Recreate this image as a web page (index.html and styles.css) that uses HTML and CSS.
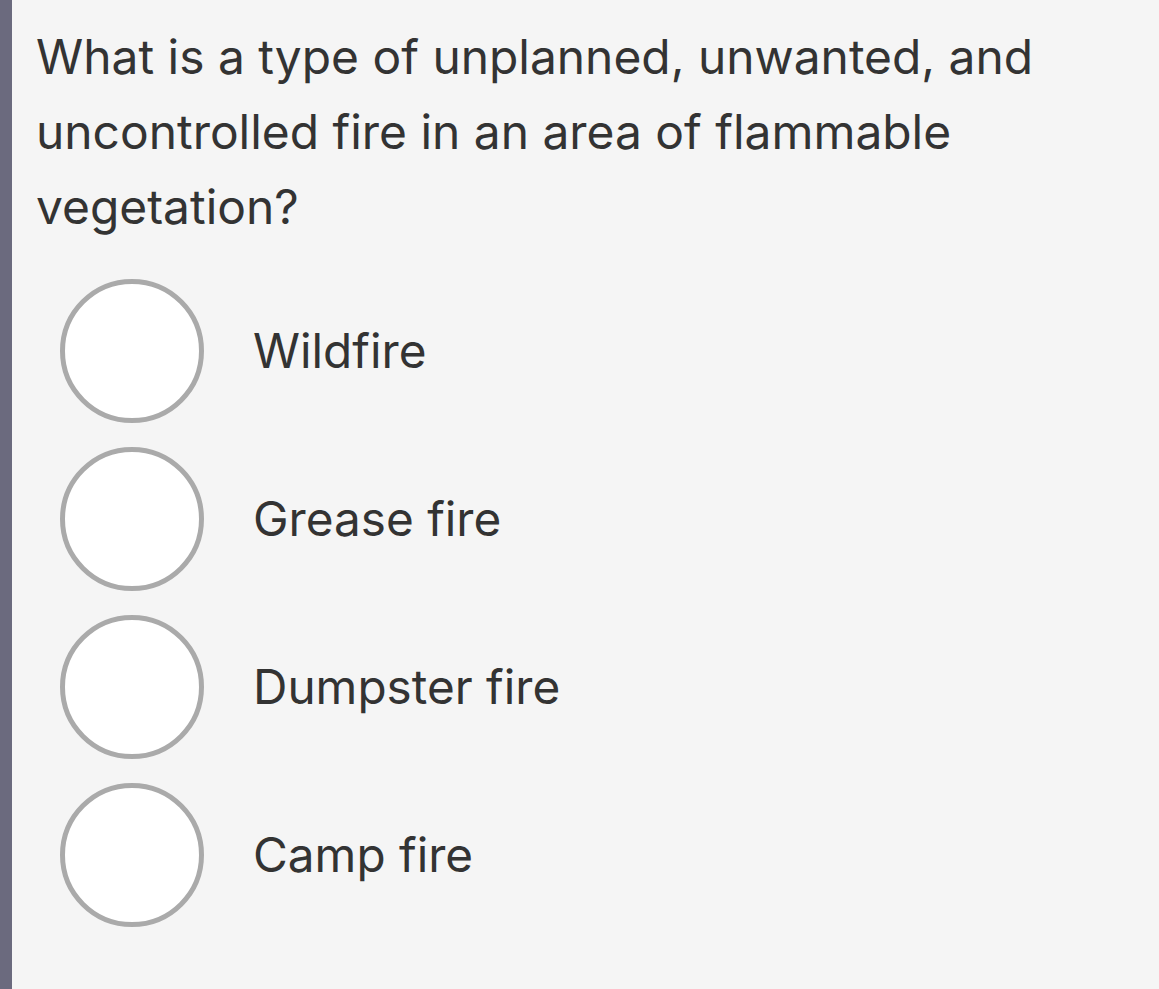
FILE: index.html
```html
<!DOCTYPE html>
<html>
<head>
<meta charset="utf-8">
<link rel="stylesheet" href="styles.css">
</head>
<body>
<div class="card">
  <p class="question">What is a type of unplanned, unwanted, and uncontrolled fire in an area of flammable vegetation?</p>
  <div class="options">
    <div class="option"><span class="radio"></span><span class="label">Wildfire</span></div>
    <div class="option"><span class="radio"></span><span class="label">Grease fire</span></div>
    <div class="option"><span class="radio"></span><span class="label">Dumpster fire</span></div>
    <div class="option"><span class="radio"></span><span class="label">Camp fire</span></div>
  </div>
</div>
</body>
</html>
```
FILE: styles.css
```css
html, body {
  margin: 0;
  padding: 0;
  background: #f5f5f5;
  height: 100%;
}
.card {
  min-height: 100%;
  box-sizing: border-box;
  border-left: 12px solid #6b6a7e;
  padding: 20px 40px 0 24px;
  font-family: Inter, "Noto Sans", sans-serif;
  color: #333;
}
.question {
  margin: 0;
  font-size: 47.9px;
  line-height: 75px;
  width: 1020px;
}
.options {
  display: flex;
  flex-direction: column;
  gap: 24px;
  margin-top: 34px;
  padding-left: 24px;
}
.option {
  display: flex;
  align-items: center;
  gap: 49px;
}
.radio {
  width: 144px;
  height: 144px;
  box-sizing: border-box;
  border: 5px solid #aaaaaa;
  border-radius: 50%;
  background: #fff;
  flex-shrink: 0;
}
.label {
  font-size: 47.7px;
}
```
